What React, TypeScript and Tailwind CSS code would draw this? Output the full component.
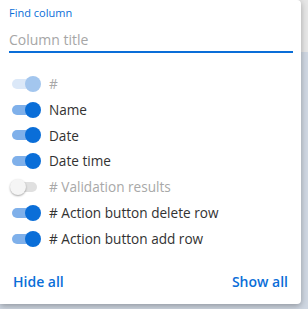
import React, { useState } from "react";

const columns = [
  { label: "#", on: true, disabled: true },
  { label: "Name", on: true },
  { label: "Date", on: true },
  { label: "Date time", on: true },
  { label: "# Validation results", on: false, disabled: true },
  { label: "# Action button delete row", on: true },
  { label: "# Action button add row", on: true },
];

const Toggle = ({ on, disabled }: { on: boolean; disabled?: boolean }) => {
  // three looks: on, on but locked, off and locked
  const track = on
    ? disabled
      ? "bg-[#dbe8f8]"
      : "bg-[#7fb0ea]"
    : "bg-[#e0e0e0]";
  const thumb = on
    ? disabled
      ? "bg-[#a3c6ee]"
      : "bg-[#0a6ed8]"
    : "bg-[#f5f5f5] shadow-[0_1px_2px_rgba(0,0,0,0.35)]";
  return (
    <div className="relative w-[31px] h-[16px] flex items-center shrink-0">
      <div className={`ml-[2px] w-[25px] h-[10px] rounded-full ${track}`} />
      <div
        className={`absolute top-[0px] w-[16px] h-[16px] rounded-full ${thumb} ${
          on ? "left-[15px]" : "left-0"
        }`}
      />
    </div>
  );
};

export default function App() {
  const [query, setQuery] = useState("");

  return (
    <div
      className="w-[308px] h-[309px] bg-[#cfd7e2] overflow-hidden"
      style={{ fontFamily: '"Open Sans", "Noto Sans", sans-serif' }}
    >
      <div className="h-[52px] bg-[#e6e6e6] -mb-[52px]" />
      <div className="relative w-[301px] h-[304px] bg-white rounded-br-[4px] rounded-tr-[4px] shadow-[0_2px_6px_rgba(0,0,0,0.3)] flex flex-col">
        <div className="px-[9px] pt-[5px]">
          <div className="text-[11px] leading-[16px] text-[#0a6ed8]">Find column</div>
          <input
            value={query}
            onChange={(e) => setQuery(e.target.value)}
            placeholder="Column title"
            className="mt-[8px] w-[284px] h-[24px] text-[14px] text-[#333] placeholder:text-[#a6a6a6] outline-none border-b-2 border-[#0a6ed8] pb-[2px]"
          />
        </div>

        <div className="flex flex-col mt-[18px] pl-[10px]">
          {columns.map((c) => (
            <div key={c.label} className="flex items-center h-[25.8px] gap-[8px]">
              <Toggle on={c.on} disabled={c.disabled} />
              <span
                className={`text-[13.6px] leading-none ${
                  c.disabled ? "text-[#a8a8a8]" : "text-[#323232]"
                }`}
              >
                {c.label}
              </span>
            </div>
          ))}
        </div>

        <div className="flex justify-between items-center px-[13px] mt-auto mb-[12px]">
          <button className="text-[14px] font-semibold text-[#0a6ed8]">Hide all</button>
          <button className="text-[14px] font-semibold text-[#0a6ed8]">Show all</button>
        </div>
      </div>
    </div>
  );
}
